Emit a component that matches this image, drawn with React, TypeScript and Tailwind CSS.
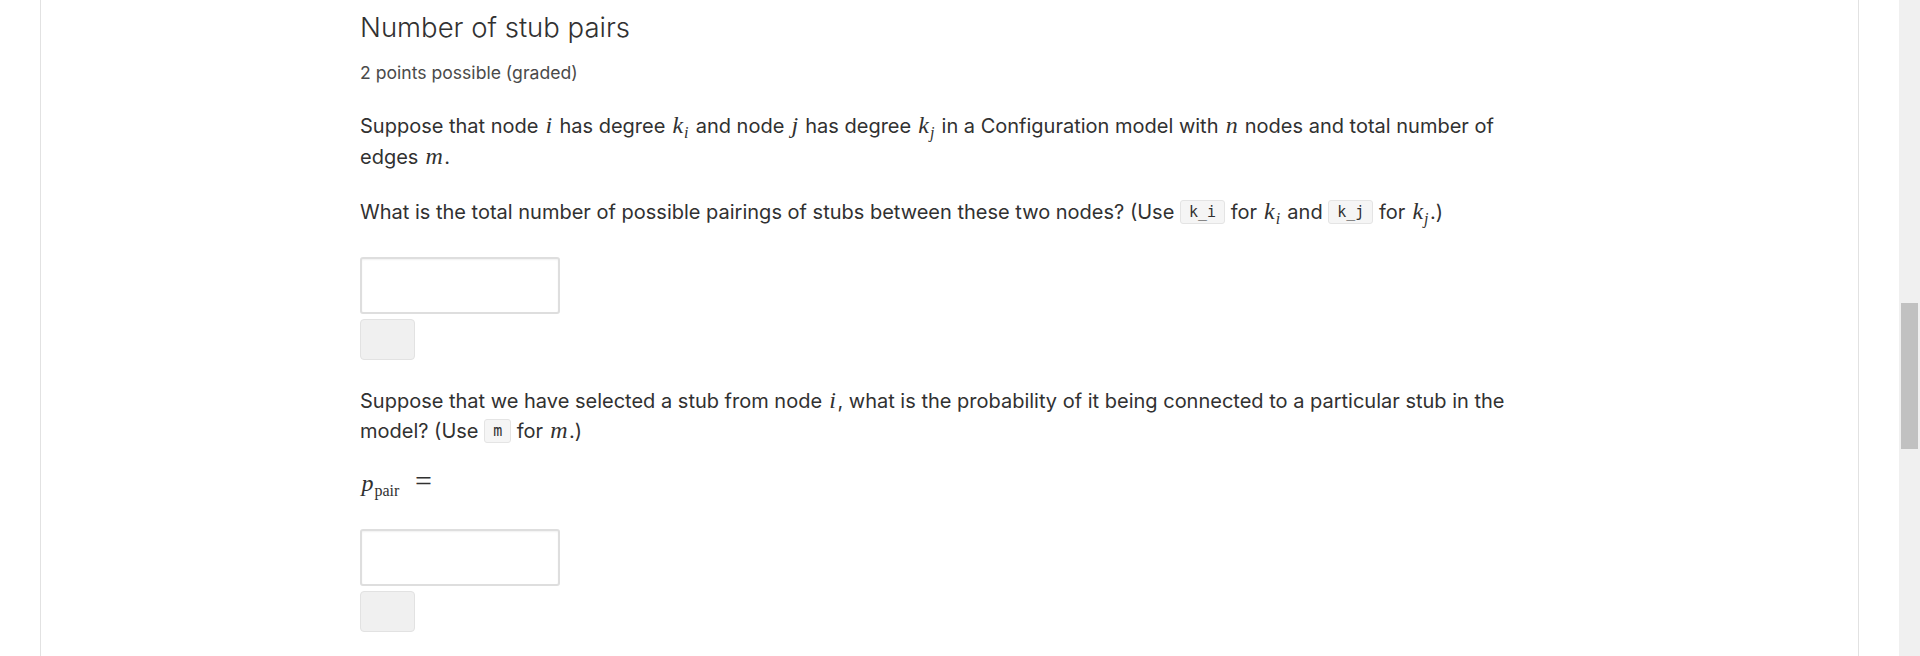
import React from 'react';

function M({ children }: { children: React.ReactNode }) {
  return (
    <span className="inline-block px-[1.5px] font-['Liberation_Serif',serif] italic text-[24px] leading-[20px]">
      {children}
    </span>
  );
}

function Sub({ children, upright = false }: { children: React.ReactNode; upright?: boolean }) {
  return (
    <span
      className={`relative top-[5px] ml-[1px] text-[16px] leading-[12px] ${upright ? 'not-italic' : 'italic'}`}
    >
      {children}
    </span>
  );
}

function Code({ children }: { children: React.ReactNode }) {
  return (
    <code className="inline-block px-2 h-[24px] leading-[22px] align-[2px] text-[15px] font-['DejaVu_Sans_Mono',monospace] text-[#313131] bg-[#f5f5f5] border border-[#e4e4e4] rounded-[3px]">
      {children}
    </code>
  );
}

function AnswerField({ top }: { top: string }) {
  return (
    <div className={`flex flex-col items-start ${top}`}>
      <input
        type="text"
        aria-label="answer"
        className="w-[200px] h-[57px] bg-white border-2 border-[#dedede] rounded-[3px] shadow-[inset_0_1px_2px_rgba(0,0,0,0.06)] outline-none"
      />
      <button className="mt-[5px] w-[55px] h-[41px] bg-[#f0f0f0] border border-[#e2e2e2] rounded-[4px]" aria-label="submit" />
    </div>
  );
}

export default function App() {
  return (
    <div className="flex h-[656px] w-[1920px] overflow-hidden bg-white text-[#313131] font-['Inter','Noto_Sans',sans-serif]">
      <div className="w-[40px] shrink-0 bg-white" />
      <main className="flex-1 border-x border-[#e2e2e2] bg-white pl-[319px] pt-[12px]">
        <div className="w-[1165px]">
          <h2 className="text-[27.5px] leading-[30px] font-light text-[#313131]">Number of stub pairs</h2>
          <div className="mt-[19px] text-[17.6px] leading-[24px] text-[#4a4a4a]">2 points possible (graded)</div>

          <p className="mt-[26px] text-[20px] leading-[30.6px]">
            Suppose that node <M>i</M> has degree <M>k<Sub>i</Sub></M> and node <M>j</M> has degree{' '}
            <M>k<Sub>j</Sub></M> in a Configuration model with <M>n</M> nodes and total number of edges <M>m</M>.
          </p>

          <p className="mt-[25px] text-[20px] leading-[30.6px]">
            What is the total number of possible pairings of stubs between these two nodes? (Use <Code>k_i</Code> for{' '}
            <M>k<Sub>i</Sub></M> and <Code>k_j</Code> for <M>k<Sub>j</Sub></M>.)
          </p>

          <AnswerField top="mt-[29px]" />

          <p className="mt-[26px] text-[20px] leading-[30.6px]">
            Suppose that we have selected a stub from node <M>i</M>, what is the probability of it being connected to a
            particular stub in the model? (Use <Code>m</Code> for <M>m</M>.)
          </p>

          <div className="mt-[23px] h-[30px] leading-[30px]">
            <M>
              p<Sub upright>pair</Sub>
            </M>
            <span className="ml-[14px] font-['Liberation_Serif',serif] text-[30px] leading-[20px]">=</span>
          </div>

          <AnswerField top="mt-[29px]" />
        </div>
      </main>
      <div className="w-[40px] shrink-0 bg-white" />
      <div className="w-[21px] shrink-0 bg-[#f0f0f0] flex flex-col">
        <div className="h-[303px]" />
        <div className="ml-[2px] w-[17px] h-[146px] bg-[#c1c1c1]" />
      </div>
    </div>
  );
}
